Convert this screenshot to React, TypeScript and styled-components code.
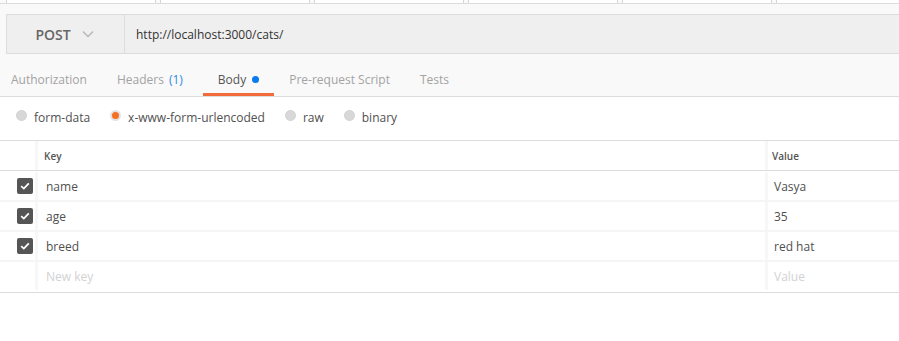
import React from "react";
import styled, { createGlobalStyle } from "styled-components";

const GlobalStyle = createGlobalStyle`
  html, body {
    margin: 0;
    padding: 0;
    background: #ffffff;
    font-family: "Open Sans", "Noto Sans", sans-serif;
    color: #505050;
  }
`;

type Param = { key: string; value: string };

const params: Param[] = [
  { key: "name", value: "Vasya" },
  { key: "age", value: "35" },
  { key: "breed", value: "red hat" },
];

const bodyModes = ["form-data", "x-www-form-urlencoded", "raw", "binary"];

const App = () => {
  return (
    <Page>
      <GlobalStyle />
      <TabStrip>
        {[0, 1, 2, 3, 4, 5].map((i) => (
          <StripBox key={i} />
        ))}
      </TabStrip>

      <RequestPanel>
        <UrlBar>
          <MethodSelect>
            POST
            <svg width="12" height="8" viewBox="0 0 12 8">
              <path d="M1 1.5 L6 6.5 L11 1.5" fill="none" stroke="#b5b5b5" strokeWidth="1.3" />
            </svg>
          </MethodSelect>
          <UrlInput>http://localhost:3000/cats/</UrlInput>
        </UrlBar>

        <Tabs>
          <Tab>Authorization</Tab>
          <Tab>
            Headers <Count>(1)</Count>
          </Tab>
          <Tab active>
            Body <Dot />
          </Tab>
          <Tab>Pre-request Script</Tab>
          <Tab>Tests</Tab>
        </Tabs>
      </RequestPanel>

      <ModeRow>
        {bodyModes.map((m) => (
          <ModeOption key={m}>
            <Radio checked={m === "x-www-form-urlencoded"} />
            {m}
          </ModeOption>
        ))}
      </ModeRow>

      <Table>
        <HeadRow>
          <CheckCell />
          <KeyCell>
            <HeadLabel>Key</HeadLabel>
          </KeyCell>
          <ValueCell>
            <HeadLabel>Value</HeadLabel>
          </ValueCell>
        </HeadRow>
        {params.map((p) => (
          <Row key={p.key}>
            <CheckCell>
              <CheckBox>
                <svg width="10" height="8" viewBox="0 0 10 8">
                  <path d="M1.2 4.2 L3.8 6.6 L8.8 1.4" fill="none" stroke="#ffffff" strokeWidth="1.8" />
                </svg>
              </CheckBox>
            </CheckCell>
            <KeyCell>{p.key}</KeyCell>
            <ValueCell>{p.value}</ValueCell>
          </Row>
        ))}
        <Row last>
          <CheckCell />
          <KeyCell>
            <Placeholder>New key</Placeholder>
          </KeyCell>
          <ValueCell>
            <Placeholder>Value</Placeholder>
          </ValueCell>
        </Row>
      </Table>
    </Page>
  );
};

const Page = styled.div`
  width: 899px;
  height: 341px;
  overflow: hidden;
  background: #fff;
`;

const TabStrip = styled.div`
  display: flex;
  gap: 4px;
  height: 3px;
  padding-left: 6px;
  border-bottom: 1px solid #dcdcdc;
  background: #fafafa;
`;

const StripBox = styled.div`
  flex: 0 0 150px;
  box-sizing: border-box;
  border-left: 1px solid #d6d6d6;
  border-right: 1px solid #d6d6d6;
  background: #fff;
`;

const RequestPanel = styled.div`
  background: #f9f9f9;
  padding-top: 10px;
  border-bottom: 1px solid #dcdcdc;
`;

const UrlBar = styled.div`
  display: flex;
  height: 38px;
  margin-left: 6px;
  background: #efefef;
  border: 1px solid #dcdcdc;
  border-right: none;
`;

const MethodSelect = styled.div`
  width: 115px;
  display: flex;
  align-items: center;
  justify-content: center;
  gap: 11px;
  padding-right: 2px;
  border-right: 1px solid #dcdcdc;
  font-size: 14px;
  font-weight: 600;
  color: #666;
`;

const UrlInput = styled.div`
  display: flex;
  align-items: center;
  padding-left: 11px;
  font-size: 12px;
  color: #333;
`;

const Tabs = styled.div`
  display: flex;
  height: 42px;
`;

const Tab = styled.div<{ active?: boolean }>`
  display: flex;
  align-items: center;
  gap: 5px;
  padding: 11px 15px 0;
  font-size: 12px;
  color: ${(p) => (p.active ? "#555" : "#a3a3a3")};
  border-bottom: 3px solid ${(p) => (p.active ? "#f26b3a" : "transparent")};
  &:first-child {
    padding-left: 11px;
  }
`;

const Count = styled.span`
  color: #2b8ae6;
  margin-right: 5px;
`;

const Dot = styled.span`
  width: 7px;
  height: 7px;
  border-radius: 50%;
  background: #097bed;
  margin-left: 1px;
`;

const ModeRow = styled.div`
  display: flex;
  align-items: center;
  gap: 20px;
  height: 43px;
  padding-left: 16px;
  border-bottom: 1px solid #dcdcdc;
`;

const ModeOption = styled.label`
  display: flex;
  align-items: center;
  gap: 7px;
  font-size: 12px;
  color: #505050;
  margin-top: -3px;
`;

const Radio = styled.span<{ checked?: boolean }>`
  box-sizing: border-box;
  width: 11px;
  height: 11px;
  margin-top: -3px;
  border-radius: 50%;
  background: ${(p) => (p.checked ? "#f47023" : "#d8d8d8")};
  border: ${(p) => (p.checked ? "2px solid #e4e4e4" : "1px solid #d2d2d2")};
`;

const Table = styled.div`
  border-bottom: 1px solid #dcdcdc;
`;

const Row = styled.div<{ last?: boolean }>`
  display: flex;
  height: 28px;
  border-bottom: 2px solid ${(p) => (p.last ? "transparent" : "#f5f5f5")};
  font-size: 12px;
  color: #505050;
`;

const HeadRow = styled(Row)`
  height: 29px;
  border-bottom: 1px solid #dcdcdc;
  margin-bottom: 1px;
`;

const CheckCell = styled.div`
  flex: 0 0 35px;
  display: flex;
  align-items: center;
  justify-content: flex-end;
  padding-right: 2px;
  box-sizing: border-box;
`;

const KeyCell = styled.div`
  flex: 1;
  display: flex;
  align-items: center;
  padding-left: 8px;
  border-left: 3px solid #f7f7f7;
  padding-top: 1px;
`;

const ValueCell = styled.div`
  flex: 0 0 125px;
  display: flex;
  align-items: center;
  padding-left: 6px;
  border-left: 3px solid #f7f7f7;
  padding-top: 1px;
`;

const HeadLabel = styled.span`
  font-size: 10px;
  font-weight: 600;
  color: #555;
  margin-left: -2px;
`;

const Placeholder = styled.span`
  color: #d2d2d2;
`;

const CheckBox = styled.span`
  width: 16px;
  height: 16px;
  border-radius: 2px;
  background: #555;
  display: flex;
  align-items: center;
  justify-content: center;
`;

export default App;
